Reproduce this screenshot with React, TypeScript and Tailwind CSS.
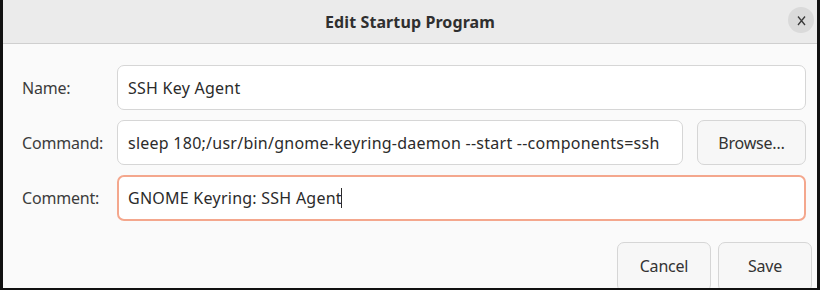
import { useState } from "react"

const font = { fontFamily: "'Noto Sans', 'Open Sans', sans-serif" }

function Field({ value, focused }: { value: string; focused?: boolean }) {
  return (
    <div
      className={
        focused
          ? "flex-1 h-[46px] rounded-[7px] border-2 border-[#f4a78d] bg-white flex items-center pl-[9px] text-[16px] text-[#2b2b2b]"
          : "flex-1 h-[45px] rounded-[7px] border border-[#d6d6d6] bg-white flex items-center pl-[10px] text-[16px] text-[#2b2b2b]"
      }
    >
      <span className="tracking-[0.25px] whitespace-nowrap">{value}</span>
      {focused && <span className="w-px h-[20px] bg-[#2b2b2b] -ml-[1px]" />}
    </div>
  )
}

export default function App() {
  const [name] = useState("SSH Key Agent")
  const [command] = useState("sleep 180;/usr/bin/gnome-keyring-daemon --start --components=ssh")
  const [comment] = useState("GNOME Keyring: SSH Agent")

  return (
    <div className="w-[820px] h-[293px] bg-white overflow-hidden" style={font}>
      <div className="w-[820px] h-[290px] border-l-[3px] border-r-[3px] border-b-[2px] border-[#111] bg-[#fafafa] flex flex-col overflow-hidden">
        {/* Header */}
        <div className="h-[44px] shrink-0 bg-[#ebebeb] border-b border-[#cfcfcf] flex items-center justify-center relative">
          <span className="text-[16px] font-bold text-[#2f2f2f] tracking-[0.1px]">Edit Startup Program</span>
          <button className="absolute right-[3px] top-[7px] h-[26px] w-[26px] rounded-full bg-[#dadada] flex items-center justify-center">
            <svg width="9" height="11" viewBox="0 0 9 11">
              <path d="M1 1.5 L8 10 M8 1.5 L1 10" stroke="#3a3a3a" strokeWidth="1.3" fill="none" />
            </svg>
          </button>
        </div>

        {/* Body */}
        <div className="flex flex-col gap-[10px] pt-[21px] pl-[19px] pr-[11px]">
          <div className="flex items-center">
            <span className="w-[95px] text-[16px] text-[#3c3c3c] tracking-[-0.2px]">Name:</span>
            <Field value={name} />
          </div>
          <div className="flex items-center gap-[14px]">
            <div className="flex-1 flex items-center">
              <span className="w-[95px] text-[16px] text-[#3c3c3c] tracking-[-0.2px]">Command:</span>
              <Field value={command} />
            </div>
            <button className="w-[109px] h-[45px] rounded-[7px] border border-[#d6d6d6] bg-[#f7f7f7] text-[16px] text-[#333] tracking-[-0.2px]">
              Browse…
            </button>
          </div>
          <div className="flex items-center">
            <span className="w-[95px] text-[16px] text-[#3c3c3c] tracking-[-0.2px]">Comment:</span>
            <Field value={comment} focused />
          </div>
        </div>

        {/* Footer */}
        <div className="flex justify-end gap-[7px] pr-[5px] pt-[21px]">
          <button className="w-[94px] h-[50px] rounded-[7px] border border-[#d6d6d6] bg-[#f7f7f7] text-[16px] text-[#333] tracking-[-0.2px] pb-[2px]">
            Cancel
          </button>
          <button className="w-[94px] h-[50px] rounded-[7px] border border-[#d6d6d6] bg-[#f7f7f7] text-[16px] text-[#333] tracking-[-0.2px] pb-[2px]">
            Save
          </button>
        </div>
      </div>
    </div>
  )
}
